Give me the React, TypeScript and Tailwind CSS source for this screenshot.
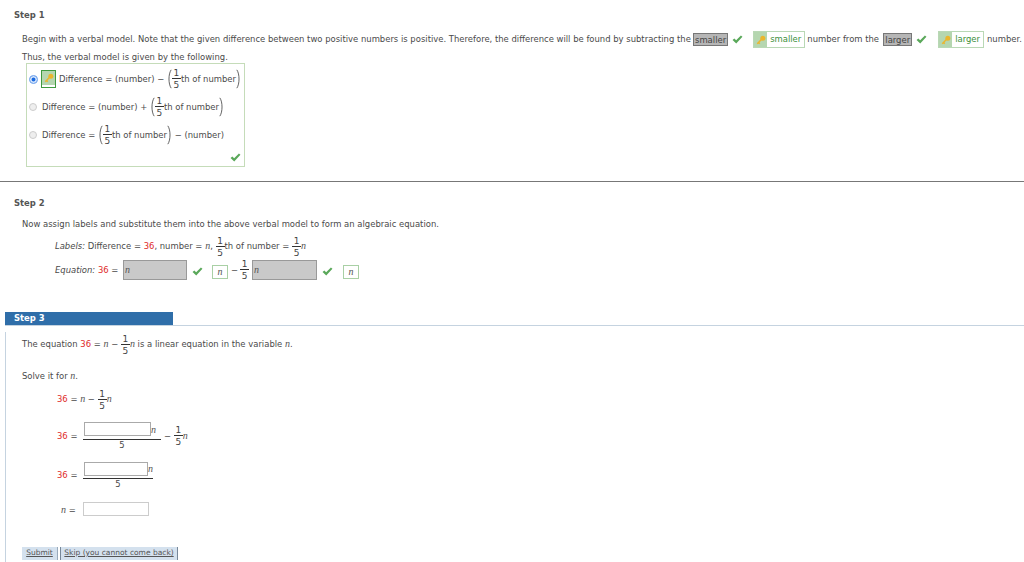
// App.tsx
function Check({ className = '' }: { className?: string }) {
  return (
    <svg viewBox="0 0 12 10" className={`w-[11px] h-[9px] shrink-0 ${className}`}>
      <path d="M0.5 5.5 L2.5 3.8 L4.5 5.8 L9.8 0.6 L11.5 2 L4.6 9.5 Z" fill="#5aa85a" />
    </svg>
  )
}

function Frac({ bar = 'w-[9px]' }: { bar?: string }) {
  return (
    <span className="inline-flex flex-col items-center align-middle leading-[10px] text-[9px]">
      <span className="text-[#444]">1</span>
      <span className={`h-px bg-[#333] ${bar}`} />
      <span className="text-[#444] mt-px">5</span>
    </span>
  )
}

function Paren({ side }: { side: 'l' | 'r' }) {
  return (
    <svg viewBox="0 0 6 24" className="inline-block align-middle w-[5px] h-[24px]">
      <path
        d={side === 'l' ? 'M5 1 C1.5 6 1.5 18 5 23' : 'M1 1 C4.5 6 4.5 18 1 23'}
        fill="none"
        stroke="#444"
        strokeWidth="1"
      />
    </svg>
  )
}

function Key({ size = 'w-[13px] h-[14px]' }: { size?: string }) {
  return (
    <span className={`inline-flex items-center justify-center bg-[#b5d6b0] shrink-0 ${size}`}>
      <svg viewBox="0 0 12 12" className="w-[10px] h-[10px]">
        <circle cx="8.2" cy="3.8" r="3" fill="#eab62e" />
        <path d="M6.5 5.5 L1.5 10.5 M3 9 L4.5 10.5" stroke="#eab62e" strokeWidth="1.8" fill="none" />
      </svg>
    </span>
  )
}

function Gray({ children }: { children: string }) {
  return <span className="bg-[#b6b6b6] border border-[#777] px-px leading-[12px] h-[13px] text-[#444]">{children}</span>
}

function Answer({ word, className = '' }: { word: string; className?: string }) {
  return (
    <span className={`inline-flex items-center h-[17px] border border-[#b9d8b5] ${className}`}>
      <Key size="w-[13px] h-[15px]" />
      <span className="text-[#3b8f3b] px-[3px]">{word}</span>
    </span>
  )
}

function V() {
  return <i className="font-['Liberation_Serif',serif] text-[#555] text-[10px]">n</i>
}

function Red() {
  return <span className="text-[#e02a2a]">36</span>
}

function Radio({ checked = false }: { checked?: boolean }) {
  return checked ? (
    <span className="w-[9px] h-[9px] rounded-full border border-[#8ab4f0] bg-[#1a6ae0] shadow-[inset_0_0_0_1.5px_#dbe8fb] shrink-0" />
  ) : (
    <span className="w-[8px] h-[8px] rounded-full border border-[#ccc] bg-[#eee] shrink-0" />
  )
}

function Unit() {
  return (
    <span className="inline-flex items-center justify-center w-[16px] h-[14px] border border-[#a9d0a5]">
      <V />
    </span>
  )
}

export default function App() {
  return (
    <div className="w-[1024px] h-[562px] overflow-hidden bg-white text-[#4a4a4a] text-[8.45px] font-['DejaVu_Sans',sans-serif] whitespace-nowrap">
      {/* STEP 1 */}
      <div className="pl-[14px] pt-[10px] h-[182px] border-b border-[#777]">
        <div className="font-bold text-[#555] leading-[11px]">Step 1</div>
        <div className="ml-[8px] mt-[10px] flex items-center h-[17px]">
          <span className="w-[671px]">Begin with a verbal model. Note that the given difference between two positive numbers is positive. Therefore, the difference will be found by subtracting the</span>
          <Gray>smaller</Gray>
          <Check className="ml-[4px]" />
          <Answer word="smaller" className="ml-[10px]" />
          <span className="ml-[2px] w-[76px]">number from the</span>
          <Gray>larger</Gray>
          <Check className="ml-[4px]" />
          <Answer word="larger" className="ml-[11px]" />
          <span className="ml-[3px]">number.</span>
        </div>
        <div className="ml-[8px] leading-[11px] mt-[4px]">Thus, the verbal model is given by the following.</div>
        <div className="ml-[12px] w-[219px] h-[104px] border border-[#c5dcb9] pl-[2px] pt-[1px] relative">
          <div className="flex items-center gap-[3px] h-[28px]">
            <Radio checked />
            <span className="border border-[#3f9a3f]"><Key /></span>
            <span>Difference = (number) − <Paren side="l" /><Frac />th of number<Paren side="r" /></span>
          </div>
          <div className="flex items-center gap-[5px] h-[28px]">
            <Radio />
            <span>Difference = (number) + <Paren side="l" /><Frac />th of number<Paren side="r" /></span>
          </div>
          <div className="flex items-center gap-[5px] h-[28px]">
            <Radio />
            <span>Difference = <Paren side="l" /><Frac />th of number<Paren side="r" /> − (number)</span>
          </div>
          <Check className="absolute right-[3px] bottom-[4px]" />
        </div>
      </div>

      {/* STEP 2 */}
      <div className="pl-[14px] pt-[16px] h-[130px]">
        <div className="font-bold text-[#555] leading-[11px]">Step 2</div>
        <div className="ml-[8px] mt-[10px] leading-[11px]">Now assign labels and substitute them into the above verbal model to form an algebraic equation.</div>
        <div className="ml-[41px] mt-[5px] h-[22px] leading-[22px]">
          <i>Labels:</i> Difference = <Red />, number = <V />, <Frac />th of number = <Frac /><V />
        </div>
        <div className="ml-[41px] mt-[2px] h-[22px] flex items-center">
          <span className="w-[68px]"><i>Equation:</i> <Red /> =</span>
          <span className="w-[64px] h-[20px] -mt-[1px] bg-[#c9c9c9] border border-[#999] pl-px flex items-center"><V /></span>
          <Check className="ml-[5px] mt-[3px]" />
          <span className="ml-[9px] mt-[3px] flex"><Unit /></span>
          <span className="ml-[3px] mr-[2px]">−</span>
          <Frac />
          <span className="ml-[3px] w-[65px] h-[20px] -mt-[1px] bg-[#c9c9c9] border border-[#999] pl-px flex items-center"><V /></span>
          <Check className="ml-[5px] mt-[3px]" />
          <span className="ml-[10px] mt-[3px] flex"><Unit /></span>
        </div>
      </div>

      {/* STEP 3 */}
      <div className="pl-[5px] h-[250px]">
        <div className="h-[14px] border-b border-[#c5d3e0]">
          <div className="w-[168px] h-[13px] bg-[#2f6ea9] text-white font-bold pl-[9px] leading-[12px]">Step 3</div>
        </div>
        <div className="border-l border-[#c5d3e0] h-[236px] pl-[16px]">
          <div className="h-[24px] mt-[6px] leading-[24px]">
            The equation <Red /> = <V /> − <Frac /><V /> is a linear equation in the variable <V />.
          </div>
          <div className="mt-[14px] leading-[11px]">Solve it for <V />.</div>

          <div className="ml-[35px] mt-[4px] h-[26px] leading-[26px]">
            <Red /> = <V /> − <Frac /><V />
          </div>

          <div className="ml-[35px] mt-[5px] h-[38px] flex items-center">
            <span className="w-[26px]"><Red /> =</span>
            <span className="inline-flex flex-col items-center">
              <span className="flex items-start border-b border-[#333] pl-px pb-[2px] w-[78px]">
                <span className="w-[67px] h-[14px] border border-[#aaa] bg-white" />
                <V />
              </span>
              <span className="leading-[10px]">5</span>
            </span>
            <span className="ml-[3px]">− <Frac /><V /></span>
          </div>

          <div className="ml-[35px] h-[36px] mt-[2px] flex items-center">
            <span className="w-[26px]"><Red /> =</span>
            <span className="inline-flex flex-col items-center">
              <span className="flex items-end border-b border-[#333] pl-px pb-[2px] w-[70px]">
                <span className="w-[67px] h-[14px] border border-[#aaa] bg-white" />
                <V />
              </span>
              <span className="leading-[11px]">5</span>
            </span>
          </div>

          <div className="ml-[39px] mt-[8px] h-[16px] flex items-center">
            <span className="w-[22px]"><V /> =</span>
            <span className="w-[66px] h-[14px] border border-[#ccc] bg-white" />
          </div>

          <div className="mt-[30px] flex gap-[2px] text-[#555] text-[7.5px]">
            <span className="h-[13px] w-[36px] text-center bg-[#d4e1ee] border-r border-[#9ab] underline leading-[12px]">Submit</span>
            <span className="h-[13px] w-[118px] text-center bg-[#d4e1ee] border-x border-[#789] underline leading-[12px]">Skip (you cannot come back)</span>
          </div>
        </div>
      </div>
    </div>
  )
}
